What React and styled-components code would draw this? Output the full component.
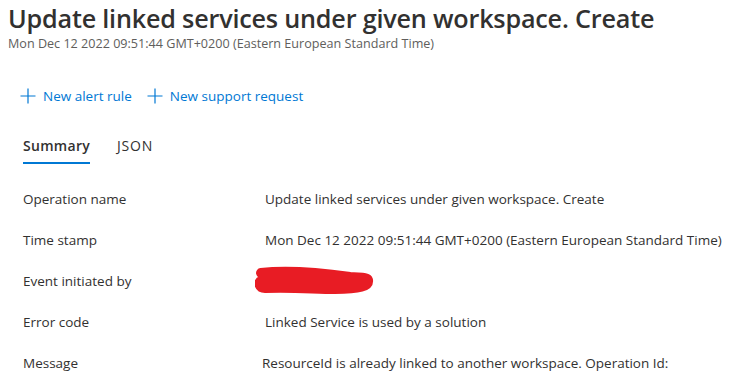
import React from "react";
import styled, { createGlobalStyle } from "styled-components";

const Global = createGlobalStyle`
  html, body { margin: 0; padding: 0; background: #fff; }
  body { font-family: "Open Sans", "Noto Sans", sans-serif; color: #323130; }
`;

const Page = styled.div`
  width: 754px;
  height: 374px;
  overflow: hidden;
  padding: 0 0 0 8px;
  box-sizing: border-box;
`;

const Title = styled.h1`
  margin: 0;
  font-size: 25.2px;
  font-weight: 600;
  line-height: 36px;
  color: #323130;
  white-space: nowrap;
  letter-spacing: -0.2px;
`;

const Subtitle = styled.div`
  font-size: 12.6px;
  line-height: 16px;
  color: #605e5c;
  white-space: nowrap;
`;

const Toolbar = styled.div`
  display: flex;
  gap: 15px;
  margin-top: 30px;
  padding-left: 12px;
  height: 28px;
  align-items: center;
`;

const ActionButton = styled.button`
  display: flex;
  align-items: center;
  gap: 7px;
  border: none;
  background: none;
  padding: 0;
  font-family: inherit;
  font-size: 13.5px;
  color: #0078d4;
  cursor: pointer;
`;

const Tabs = styled.div`
  display: flex;
  gap: 27px;
  margin-top: 26px;
  padding-left: 15px;
`;

const Tab = styled.div`
  font-size: 14px;
  line-height: 20px;
  padding-bottom: 6px;
  color: #323130;
  letter-spacing: ${(p) => (p.$active ? "0.3px" : "0.8px")};
  border-bottom: 2px solid ${(p) => (p.$active ? "#0078d4" : "transparent")};
  font-weight: ${(p) => (p.$active ? 600 : 400)};
`;

const Rows = styled.div`
  margin-top: 14px;
  padding-left: 15px;
  display: flex;
  flex-direction: column;
`;

const Row = styled.div`
  display: grid;
  grid-template-columns: 242px 1fr;
  height: 41px;
  align-items: center;
  font-size: 13.5px;
  color: #323130;
  white-space: nowrap;
`;

const Label = styled.div``;

const Value = styled.div`
  margin-left: ${(p) => p.$shift || 0}px;
`;

const Plus = () => (
  <svg width="16" height="16" viewBox="0 0 16 16">
    <path d="M8 0.5V15.5M0.5 8H15.5" stroke="#0078d4" strokeWidth="1.2" fill="none" />
  </svg>
);

const Redacted = () => (
  <svg width="124" height="30" viewBox="0 0 124 30" style={{ display: "block", marginLeft: "-10px" }}>
    <path
      d="M6 7 C30 4, 60 6, 95 11 C105 12, 112 11, 113 14 C114 20, 105 23, 80 23 C60 23, 40 21, 10 22 C4 22, 3 16, 6 15 C20 12, 50 14, 85 17 C95 18, 105 17, 108 16"
      stroke="#e81c24"
      strokeWidth="10"
      strokeLinecap="round"
      strokeLinejoin="round"
      fill="none"
    />
  </svg>
);

const rows = [
  ["Operation name", "Update linked services under given workspace. Create"],
  ["Time stamp", "Mon Dec 12 2022 09:51:44 GMT+0200 (Eastern European Standard Time)"],
  ["Event initiated by", null],
  ["Error code", "Linked Service is used by a solution"],
  ["Message", "ResourceId is already linked to another workspace. Operation Id:", -3],
];

export default function App() {
  return (
    <Page>
      <Global />
      <Title>Update linked services under given workspace. Create</Title>
      <Subtitle>Mon Dec 12 2022 09:51:44 GMT+0200 (Eastern European Standard Time)</Subtitle>
      <Toolbar>
        <ActionButton><Plus />New alert rule</ActionButton>
        <ActionButton><Plus />New support request</ActionButton>
      </Toolbar>
      <Tabs>
        <Tab $active>Summary</Tab>
        <Tab>JSON</Tab>
      </Tabs>
      <Rows>
        {rows.map(([l, v, s]) => (
          <Row key={l}>
            <Label>{l}</Label>
            {v ? <Value $shift={s}>{v}</Value> : <Redacted />}
          </Row>
        ))}
      </Rows>
    </Page>
  );
}
